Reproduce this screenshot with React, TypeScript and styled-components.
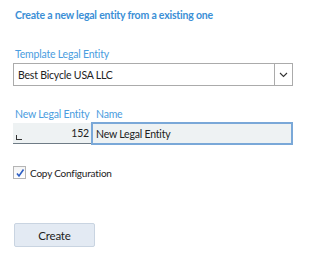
import React from "react";
import styled, { createGlobalStyle } from "styled-components";

const Global = createGlobalStyle`
  html, body { margin: 0; padding: 0; background: #fff; }
  body { font-family: Lato, "Open Sans", sans-serif; letter-spacing: -0.2px; }
`;

const Page = styled.div`
  width: 312px;
  height: 255px;
  padding: 8px 19px 0 13px;
  box-sizing: border-box;
  display: flex;
  flex-direction: column;
`;

const Title = styled.div`
  font-size: 10.5px;
  font-weight: 700;
  color: #3b8fd6;
  padding-left: 2px;
  line-height: 14px;
`;

const Label = styled.div<{ $indent?: number }>`
  font-size: 10.5px;
  color: #4a9de0;
  line-height: 14px;
  padding-left: ${(p) => p.$indent ?? 2}px;
  white-space: nowrap;
`;

const Select = styled.div`
  margin-top: 2px;
  height: 23px;
  border: 1px solid #ababab;
  box-sizing: border-box;
  display: flex;
  align-items: center;
  background: #fff;
`;

const SelectText = styled.div`
  flex: 1;
  padding-left: 4px;
  font-size: 10.5px;
  color: #222;
`;

const Arrow = styled.div`
  width: 17px;
  height: 100%;
  border-left: 1px solid #ababab;
  display: flex;
  align-items: center;
  justify-content: center;
`;

const Row = styled.div`
  display: flex;
`;

const IdCol = styled.div`
  width: 78px;
  display: flex;
  flex-direction: column;
`;

const NameCol = styled.div`
  flex: 1;
  display: flex;
  flex-direction: column;
`;

const IdField = styled.div`
  position: relative;
  height: 20px;
  margin-top: 2px;
  background: #eef2f3;
  border-bottom: 1px solid #6e7b85;
  display: flex;
  align-items: center;
  justify-content: flex-end;
  padding-right: 2px;
  font-size: 10.5px;
  color: #222;
`;

const Corner = styled.span`
  position: absolute;
  left: 3px;
  bottom: 3px;
  width: 5px;
  height: 4px;
  border-left: 1px solid #333;
  border-bottom: 1px solid #333;
`;

const NameField = styled.div`
  height: 23px;
  margin-top: 1px;
  box-sizing: border-box;
  border: 2px solid #7aa8d8;
  background: #eef2f3;
  display: flex;
  align-items: center;
  padding-left: 3px;
  font-size: 10.5px;
  color: #222;
`;

const CheckRow = styled.label`
  display: flex;
  align-items: center;
  gap: 4px;
  font-size: 10px;
  color: #222;
`;

const Box = styled.span`
  width: 13px;
  height: 13px;
  box-sizing: border-box;
  border: 1px solid #b5b5b5;
  background: linear-gradient(#f4f4f4, #fff);
  display: flex;
  align-items: center;
  justify-content: center;
`;

const Button = styled.button`
  width: 81px;
  height: 24px;
  background: #e3eaf3;
  border: 1px solid #c9d4e1;
  border-radius: 2px;
  font-family: inherit;
  letter-spacing: inherit;
  font-size: 11.5px;
  color: #222;
  padding: 0;
  margin-left: 1px;
`;

const Spacer = styled.div<{ $h: number }>`
  height: ${(p) => p.$h}px;
  flex-shrink: 0;
`;

export default function App() {
  return (
    <>
      <Global />
      <Page>
        <Title>Create a new legal entity from a existing one</Title>
        <Spacer $h={25} />
        <Label>Template Legal Entity</Label>
        <Select>
          <SelectText>Best Bicycle USA LLC</SelectText>
          <Arrow>
            <svg width="9" height="6" viewBox="0 0 9 6">
              <path d="M1 1 L4.5 4.5 L8 1" fill="none" stroke="#333" strokeWidth="1.1" />
            </svg>
          </Arrow>
        </Select>
        <Spacer $h={21} />
        <Row>
          <IdCol>
            <Label>New Legal Entity</Label>
            <IdField>
              <Corner />
              152
            </IdField>
          </IdCol>
          <NameCol>
            <Label $indent={5}>Name</Label>
            <NameField>New Legal Entity</NameField>
          </NameCol>
        </Row>
        <Spacer $h={21} />
        <CheckRow>
          <Box>
            <svg width="10" height="10" viewBox="0 0 10 10">
              <path d="M2 5.5 L4 8 L8.5 1.5" fill="none" stroke="#2e5fc4" strokeWidth="1.6" />
            </svg>
          </Box>
          Copy Configuration
        </CheckRow>
        <Spacer $h={44} />
        <Button>Create</Button>
      </Page>
    </>
  );
}
